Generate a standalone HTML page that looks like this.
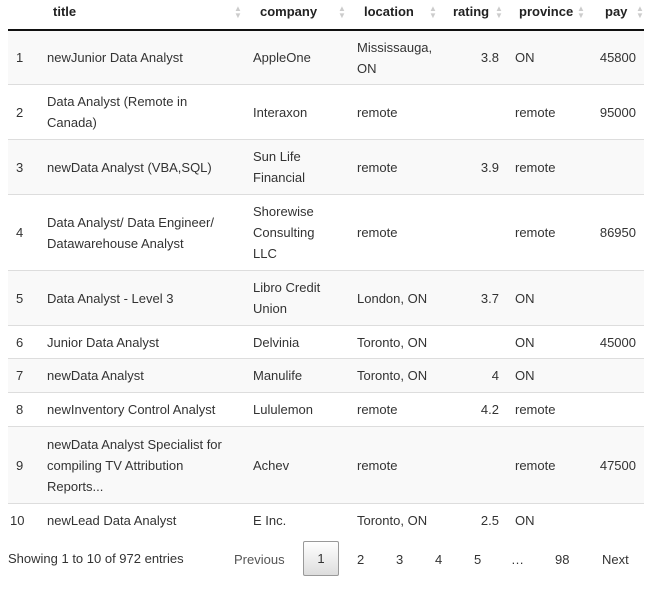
<!DOCTYPE html><html><head><style>
body{margin:0;width:658px;height:592px;background:#fff;font-family:"Liberation Sans",sans-serif;font-size:13px;color:#333;position:relative;overflow:hidden}
.h{position:absolute;top:4px;font-weight:bold;font-size:13px;color:#222}
.s{position:absolute;top:5px;font-size:8px;color:#ccc;line-height:7px}
.hb{position:absolute;left:8px;width:636px;top:29px;height:2px;background:#111}
.r{position:absolute;left:8px;width:636px;border-bottom:1px solid #ddd}
.r.o{background:#f9f9f9}
.c{position:absolute;top:0;bottom:0;display:flex;align-items:center;line-height:21px}
.n{left:8px}.t{left:39px;width:190px}.co{left:245px;width:90px}.l{left:349px;width:90px}.ra{left:440px;width:51px;justify-content:flex-end}.p{left:507px}.y{left:568px;width:60px;justify-content:flex-end}
.f{position:absolute;top:551px}
.pg{position:absolute;top:552px}
.b{position:absolute;left:303px;top:541px;width:36px;height:35px;border:1px solid #999;border-radius:2px;background:linear-gradient(#fff,#ddd);box-sizing:border-box;text-align:center;line-height:33px}
</style></head><body>
<div class="h" style="left:53px">title</div><div class="s" style="left:234px">▲<br>▼</div>
<div class="h" style="left:260px">company</div><div class="s" style="left:338px">▲<br>▼</div>
<div class="h" style="left:364px">location</div><div class="s" style="left:429px">▲<br>▼</div>
<div class="h" style="left:453px">rating</div><div class="s" style="left:495px">▲<br>▼</div>
<div class="h" style="left:519px">province</div><div class="s" style="left:577px">▲<br>▼</div>
<div class="h" style="left:605px">pay</div><div class="s" style="left:636px">▲<br>▼</div>
<div class="hb"></div>

<div class="r o" style="top:31px;height:53px"><div class="c n">1</div><div class="c t">newJunior Data Analyst</div><div class="c co">AppleOne</div><div class="c l">Mississauga,<br>ON</div><div class="c ra">3.8</div><div class="c p">ON</div><div class="c y">45800</div></div>
<div class="r" style="top:85px;height:54px"><div class="c n">2</div><div class="c t">Data Analyst (Remote in<br>Canada)</div><div class="c co">Interaxon</div><div class="c l">remote</div><div class="c ra"></div><div class="c p">remote</div><div class="c y">95000</div></div>
<div class="r o" style="top:140px;height:54px"><div class="c n">3</div><div class="c t">newData Analyst (VBA,SQL)</div><div class="c co">Sun Life<br>Financial</div><div class="c l">remote</div><div class="c ra">3.9</div><div class="c p">remote</div><div class="c y"></div></div>
<div class="r" style="top:195px;height:75px"><div class="c n">4</div><div class="c t">Data Analyst/ Data Engineer/<br>Datawarehouse Analyst</div><div class="c co">Shorewise<br>Consulting<br>LLC</div><div class="c l">remote</div><div class="c p">remote</div><div class="c y">86950</div></div>
<div class="r o" style="top:271px;height:54px"><div class="c n">5</div><div class="c t">Data Analyst - Level 3</div><div class="c co">Libro Credit<br>Union</div><div class="c l">London, ON</div><div class="c ra">3.7</div><div class="c p">ON</div></div>
<div class="r" style="top:326px;height:32px"><div class="c n">6</div><div class="c t">Junior Data Analyst</div><div class="c co">Delvinia</div><div class="c l">Toronto, ON</div><div class="c p">ON</div><div class="c y">45000</div></div>
<div class="r o" style="top:359px;height:33px"><div class="c n">7</div><div class="c t">newData Analyst</div><div class="c co">Manulife</div><div class="c l">Toronto, ON</div><div class="c ra">4</div><div class="c p">ON</div></div>
<div class="r" style="top:393px;height:33px"><div class="c n">8</div><div class="c t">newInventory Control Analyst</div><div class="c co">Lululemon</div><div class="c l">remote</div><div class="c ra">4.2</div><div class="c p">remote</div></div>
<div class="r o" style="top:427px;height:76px"><div class="c n">9</div><div class="c t">newData Analyst Specialist for<br>compiling TV Attribution<br>Reports...</div><div class="c co">Achev</div><div class="c l">remote</div><div class="c p">remote</div><div class="c y">47500</div></div>
<div class="r" style="top:504px;height:32px;border-bottom:none"><div class="c n" style="left:2px">10</div><div class="c t">newLead Data Analyst</div><div class="c co">E Inc.</div><div class="c l">Toronto, ON</div><div class="c ra">2.5</div><div class="c p">ON</div></div>

<div class="f" style="left:8px">Showing 1 to 10 of 972 entries</div>
<div class="pg" style="left:234px;color:#555">Previous</div>
<div class="b">1</div>
<div class="pg" style="left:357px">2</div>
<div class="pg" style="left:396px">3</div>
<div class="pg" style="left:435px">4</div>
<div class="pg" style="left:474px">5</div>
<div class="pg" style="left:511px">…</div>
<div class="pg" style="left:555px">98</div>
<div class="pg" style="left:602px">Next</div>
</body></html>
